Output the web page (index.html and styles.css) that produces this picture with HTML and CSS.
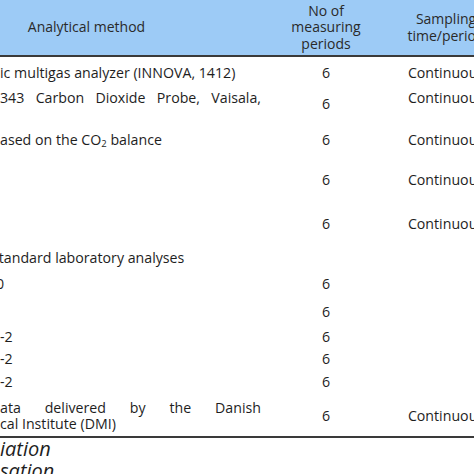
FILE: index.html
```html
<!DOCTYPE html>
<html>
<head>
<meta charset="utf-8">
<link rel="stylesheet" href="styles.css">
</head>
<body>
<div class="page">
  <div class="table">
    <div class="head">
      <div class="hcell hmethod">Analytical method</div>
      <div class="hcell">No of<br>measuring<br>periods</div>
      <div class="hcell">Sampling<br>time/period</div>
    </div>
    <div class="body">
      <div class="c1"><span>ic multigas analyzer (INNOVA, 1412)</span></div>
      <div class="c2">6</div>
      <div class="c3">Continuous</div>

      <div class="c1 top"><span class="just">343 Carbon Dioxide Probe, Vaisala,</span></div>
      <div class="c2">6</div>
      <div class="c3 top">Continuous</div>

      <div class="c1"><span>ased on the CO<sub>2</sub> balance</span></div>
      <div class="c2">6</div>
      <div class="c3">Continuous</div>

      <div class="c1"></div>
      <div class="c2">6</div>
      <div class="c3">Continuous</div>

      <div class="c1"></div>
      <div class="c2">6</div>
      <div class="c3">Continuous</div>

      <div class="c1"><span class="cut">standard laboratory analyses</span></div>
      <div class="c2"></div>
      <div class="c3"></div>

      <div class="c1"><span class="cut0">0</span></div>
      <div class="c2">6</div>
      <div class="c3"></div>

      <div class="c1"></div>
      <div class="c2">6</div>
      <div class="c3"></div>

      <div class="c1"><span>-2</span></div>
      <div class="c2">6</div>
      <div class="c3"></div>

      <div class="c1"><span>-2</span></div>
      <div class="c2">6</div>
      <div class="c3"></div>

      <div class="c1"><span>-2</span></div>
      <div class="c2">6</div>
      <div class="c3"></div>

      <div class="c1 two"><span class="just">ata delivered by the Danish</span><span>cal Institute (DMI)</span></div>
      <div class="c2">6</div>
      <div class="c3">Continuous</div>
    </div>
  </div>
  <div class="notes">
    <p>iation</p>
    <p>sation</p>
  </div>
</div>
</body>
</html>
```
FILE: styles.css
```css
html, body {
  margin: 0;
  padding: 0;
  background: #fff;
  overflow: hidden;
}
.page {
  width: 474px;
  height: 474px;
  overflow: hidden;
  font-family: "Open Sans", "Noto Sans", sans-serif;
  color: #1e1e1e;
}
.table {
  width: 507px;
  border-bottom: 2px solid #3a3a3a;
}
.head {
  display: grid;
  grid-template-columns: 267px 118px 122px;
  height: 55px;
  background: #9dcbf6;
  border-bottom: 2px solid #3a3a3a;
  font-size: 14px;
  line-height: 16.5px;
  color: #2a2a2a;
}
.hcell {
  display: flex;
  align-items: center;
  justify-content: center;
  text-align: center;
}
.hmethod {
  padding-right: 94px;
}
.body {
  display: grid;
  grid-template-columns: 267px 118px 122px;
  grid-template-rows: 31px 32px 40px 40px 48px 20px 32px 24px 26px 18px 28px 40px;
  font-size: 14.2px;
  line-height: 18px;
}
.c1, .c2, .c3 {
  display: flex;
  align-items: center;
  white-space: nowrap;
  overflow: hidden;
}
.c1 {
  padding-right: 6px;
}
.c2, .c3 {
  justify-content: center;
}
.top {
  align-items: flex-start;
  padding-top: 1px;
}
.just {
  display: block;
  width: 100%;
  text-align: justify;
  text-align-last: justify;
}
.two {
  flex-direction: column;
  align-items: stretch;
  justify-content: center;
  line-height: 16.5px;
}
.cut {
  margin-left: -8px;
}
.cut0 {
  margin-left: -4px;
}
sub {
  font-size: 9.5px;
  line-height: 0;
  vertical-align: -2px;
}
.notes {
  font-style: italic;
  font-size: 20px;
  line-height: 22px;
  color: #1e1e1e;
}
.notes p {
  margin: 0;
}
```
